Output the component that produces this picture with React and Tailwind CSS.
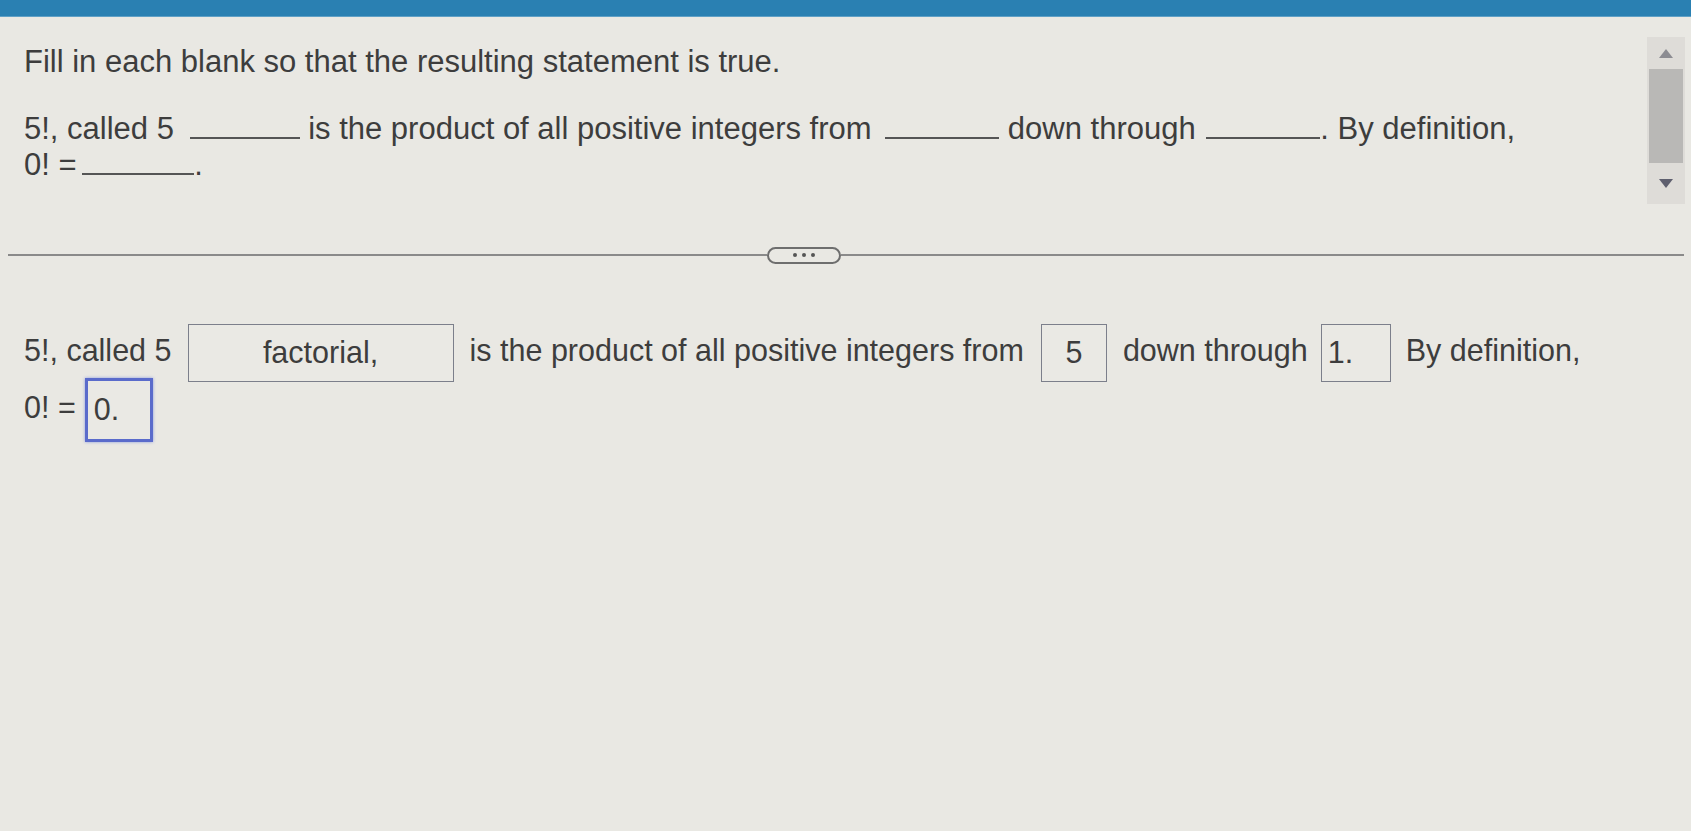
import React from "react";

function Blank({ w, ml = 0 }) {
  return (
    <span
      className="inline-block border-b-2 border-[#555555] align-baseline h-[22px]"
      style={{ width: w, marginLeft: ml }}
    />
  );
}

function Box({ children, w, className = "", align = "center" }) {
  return (
    <span
      className={
        "inline-flex items-center align-middle border-[1.5px] border-[#7c7f8b] bg-[#eae9e4] " +
        (align === "center" ? "justify-center " : "justify-start pl-[6px] ") +
        className
      }
      style={{ width: w }}
    >
      {children}
    </span>
  );
}

export default function App() {
  return (
    <div
      className="w-[1691px] h-[831px] overflow-hidden bg-[#e9e8e3] text-[#3d3d3d] text-[31px] leading-[36px]"
      style={{ fontFamily: '"Liberation Sans", Arial, sans-serif' }}
    >
      <div className="h-[17px] bg-[#2a80b2] border-b border-[#5fa0c6]" />
      <div className="flex h-[226px]">
        <div className="flex-1 pl-[24px] pt-[27px]">
          <p>Fill in each blank so that the resulting statement is true.</p>
          <p className="mt-[31px]">
            5!, called 5 <Blank w={110} ml={7} /> is the product of all positive integers from{" "}
            <Blank w={114} ml={5} /> down through <Blank w={114} ml={2} />. By definition,
            <br />
            0! = <Blank w={112} ml={-3} />.
          </p>
        </div>
        <div className="w-[38px] mr-[6px] mt-[20px] h-[167px] bg-[#dedcd8] flex flex-col items-center">
          <div className="h-[32px] flex items-center justify-center">
            <svg width="14" height="9" viewBox="0 0 14 9">
              <polygon points="7,0 14,9 0,9" fill="#8c8c92" />
            </svg>
          </div>
          <div className="w-[34px] h-[94px] bg-[#b9b8b6]" />
          <div className="flex-1 flex items-center justify-center">
            <svg width="14" height="9" viewBox="0 0 14 9">
              <polygon points="0,0 14,0 7,9" fill="#5e5f6e" />
            </svg>
          </div>
        </div>
      </div>
      <div className="flex items-center pl-[8px] pr-[7px] h-[24px]">
        <div className="w-[759px] h-[2px] bg-[#8a8a8a]" />
        <div className="w-[74px] h-[17px] rounded-full border-2 border-[#6e6e6e] flex items-center justify-center gap-[5px]">
          <span className="w-[4px] h-[4px] rounded-full bg-[#555]" />
          <span className="w-[4px] h-[4px] rounded-full bg-[#555]" />
          <span className="w-[4px] h-[4px] rounded-full bg-[#555]" />
        </div>
        <div className="flex-1 h-[2px] bg-[#8a8a8a]" />
      </div>
      <div className="pl-[24px] pt-[55px] leading-[57px] text-[30.5px]">
        <p>
          5!,&nbsp;called&nbsp;5
          <Box w={266} className="mx-[16px] h-[58px] -my-[4px]">factorial,</Box>
          is the product of all positive integers from
          <Box w={66} className="ml-[17px] mr-[16px] h-[58px] -my-[4px]">5</Box>
          down through
          <Box w={70} align="left" className="ml-[13px] mr-[15px] h-[58px] -my-[4px]">1.</Box>
          By definition,
          <br />
          0! =
          <Box
            w={68}
            align="left"
            className="ml-[9px] h-[64px] -my-[7px] !border-[3px] !border-[#5a6bcb] pl-[5px] shadow-[0_0_3px_#8d9be0]"
          >
            0.
          </Box>
        </p>
      </div>
    </div>
  );
}
